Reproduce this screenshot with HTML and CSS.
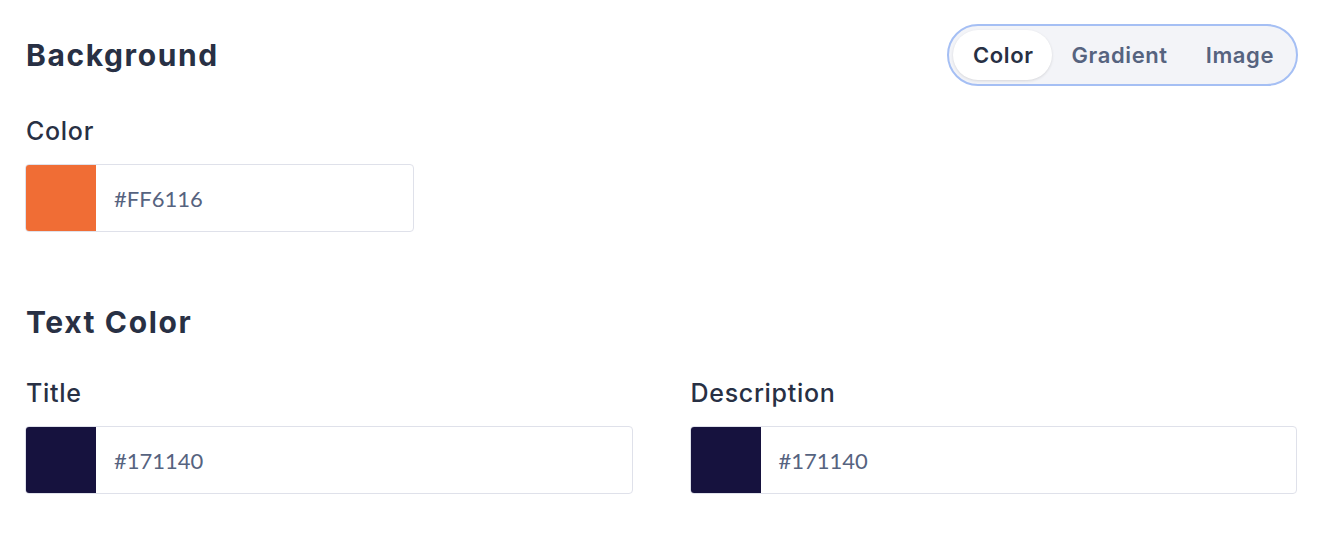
FILE: index.html
```html
<!DOCTYPE html>
<html lang="en">
<head>
    <meta charset="UTF-8">
    <meta name="viewport" content="width=device-width, initial-scale=1.0">
    <title>Colors</title>
    <link rel="stylesheet" href="styles.css">
</head>
<body>

<div class="panel">
    <div class="section-head">
        <h2>Background</h2>
        <div class="toggle">
            <button class="toggle-item active">Color</button>
            <button class="toggle-item">Gradient</button>
            <button class="toggle-item">Image</button>
        </div>
    </div>

    <div class="field field-small">
        <label>Color</label>
        <div class="color-input">
            <span class="swatch swatch-orange"></span>
            <span class="hex">#FF6116</span>
        </div>
    </div>

    <h2 class="second">Text Color</h2>

    <div class="cols">
        <div class="field">
            <label>Title</label>
            <div class="color-input">
                <span class="swatch swatch-dark"></span>
                <span class="hex">#171140</span>
            </div>
        </div>
        <div class="field">
            <label>Description</label>
            <div class="color-input">
                <span class="swatch swatch-dark"></span>
                <span class="hex">#171140</span>
            </div>
        </div>
    </div>
</div>

</body>
</html>
```

FILE: styles.css
```css
body {
    margin: 0;
    font-family: Inter, Lato, Arial, sans-serif;
    color: #283044;
    background: #fff;
}
.panel {
    padding: 24px 35px 0 25px;
}
.section-head {
    display: flex;
    justify-content: space-between;
    align-items: center;
}
h2 {
    margin: 0;
    font-size: 30px;
    font-weight: 700;
    letter-spacing: 1.6px;
    padding-left: 1px;
}
h2.second {
    margin-top: 72px;
}
.toggle {
    display: flex;
    gap: 2px;
    padding: 4px;
    border: 2px solid #a5bff4;
    border-radius: 32px;
    background: #f3f4f8;
    margin-right: -1px;
}
.toggle-item {
    font-family: inherit;
    font-size: 22px;
    font-weight: 600;
    letter-spacing: 0.6px;
    color: #56637f;
    background: none;
    border: none;
    padding: 0 18px;
    height: 50px;
    border-radius: 25px;
    cursor: pointer;
}
.toggle-item.active {
    background: #fff;
    color: #283044;
    padding: 0 18px 0 20px;
    box-shadow: 0 1px 3px rgba(0, 0, 0, 0.12);
}
.field label {
    display: block;
    font-size: 25px;
    font-weight: 500;
    letter-spacing: 0.7px;
    padding-left: 1px;
    margin-bottom: 18px;
}
.field-small {
    margin-top: 30px;
    width: 389px;
}
.cols {
    display: grid;
    grid-template-columns: 1fr 1fr;
    gap: 57px;
    margin-top: 38px;
}
.color-input {
    display: flex;
    align-items: center;
    height: 66px;
    border: 1px solid #dfe1ea;
    border-radius: 4px;
    overflow: hidden;
}
.swatch {
    width: 70px;
    height: 100%;
}
.swatch-orange {
    background: #f06d35;
}
.swatch-dark {
    background: #16123e;
}
.hex {
    margin-left: 18px;
    font-family: Lato, Arial, sans-serif;
    font-size: 22px;
    color: #56637f;
}
```
